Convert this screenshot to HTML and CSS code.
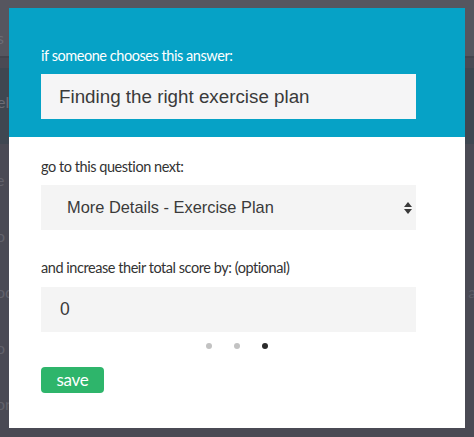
FILE: index.html
```html
<!DOCTYPE html>
<html>
<head>
<meta charset="utf-8">
<link rel="stylesheet" href="styles.css">
</head>
<body>
<div class="page">
  <div class="topbar"><span class="ghost">s</span></div>
  <div class="selected"><span class="ghost">el</span></div>
  <ul class="rows">
    <li><span>e</span></li>
    <li><span>o</span></li>
    <li><span>od</span><span class="right">al</span></li>
    <li><span>o</span></li>
    <li><span>or</span></li>
  </ul>
</div>

<div class="modal">
  <div class="modal-head">
    <label class="label label-light">if someone chooses this answer:</label>
    <div class="field field-head">Finding the right exercise plan</div>
  </div>
  <div class="modal-body">
    <label class="label">go to this question next:</label>
    <div class="field field-select">
      <span>More Details - Exercise Plan</span>
      <svg class="arrows" width="8" height="12" viewBox="0 0 8 12">
        <polygon points="4,0 8,5 0,5" fill="#3a3a3a"/>
        <polygon points="0,7 8,7 4,12" fill="#3a3a3a"/>
      </svg>
    </div>
    <label class="label label-second">and increase their total score by: (optional)</label>
    <div class="field field-score">0</div>
    <div class="dots">
      <span class="dot"></span>
      <span class="dot"></span>
      <span class="dot dot-active"></span>
    </div>
    <button class="save">save</button>
  </div>
</div>
</body>
</html>
```

FILE: styles.css
```css
* { box-sizing: border-box; }
html, body {
  margin: 0;
  padding: 0;
  width: 474px;
  height: 437px;
  overflow: hidden;
  background: #4a4a54;
  font-family: "Liberation Sans", Arial, sans-serif;
}
.page {
  width: 474px;
  height: 437px;
  display: flex;
  flex-direction: column;
}
.topbar {
  height: 58px;
  background: #56565f;
  border-bottom: 2px solid #44444d;
  padding: 28px 0 0 0;
}
.selected {
  margin-top: 10px;
  height: 76px;
  background: #3f4751;
  padding-top: 24px;
}
.ghost {
  color: #6c6c75;
  font-family: Lato, sans-serif;
  font-size: 16px;
  display: block;
  margin-left: -3px;
}
.rows {
  list-style: none;
  margin: 0;
  padding: 26px 0 0 0;
  display: flex;
  flex-direction: column;
  gap: 36px;
}
.rows li {
  color: #62626b;
  font-family: Lato, sans-serif;
  font-size: 16px;
  margin-left: -4px;
  height: 20px;
  display: flex;
  justify-content: space-between;
}
.rows .right {
  margin-right: -6px;
  color: #5c5c66;
}
.modal {
  position: absolute;
  top: 8px;
  left: 9px;
  width: 456px;
  height: 420px;
  background: #ffffff;
  display: flex;
  flex-direction: column;
}
.modal-head {
  background: #06a2c6;
  height: 129px;
  padding: 38px 49px 0 32px;
  display: flex;
  flex-direction: column;
}
.modal-body {
  padding: 20px 49px 0 32px;
  display: flex;
  flex-direction: column;
}
.label {
  display: block;
  font-family: Lato, sans-serif;
  font-size: 14.5px;
  line-height: 20px;
  letter-spacing: -0.45px;
  color: #333333;
  height: 20px;
}
.label-light { color: #ffffff; }
.field {
  height: 45px;
  background: #f4f4f4;
  font-family: "Liberation Sans", Arial, sans-serif;
  font-size: 17px;
  color: #3a3a3a;
  display: flex;
  align-items: center;
}
.field-head {
  margin-top: 8px;
  background: #f5f5f6;
  padding-left: 18px;
  font-size: 18.8px;
}
.field-select {
  margin-top: 8px;
  padding: 0 4px 0 26px;
  justify-content: space-between;
  font-size: 16.4px;
}
.arrows { display: block; }
.label-second { margin-top: 28px; }
.field-score {
  margin-top: 9px;
  padding-left: 19px;
  font-size: 17.5px;
}
.dots {
  margin-top: 11px;
  display: flex;
  justify-content: center;
  gap: 22px;
  margin-right: -17px;
  height: 6px;
}
.dot {
  width: 6px;
  height: 6px;
  border-radius: 50%;
  background: #c2c2c2;
}
.dot-active { background: #2b2b2b; }
.save {
  margin-top: 18px;
  width: 63px;
  height: 26px;
  border: none;
  border-radius: 4px;
  background: #2eb56b;
  color: #ffffff;
  font-family: Lato, sans-serif;
  font-size: 17px;
  letter-spacing: -0.3px;
  padding: 0 0 2px 0;
  align-self: flex-start;
}
```
